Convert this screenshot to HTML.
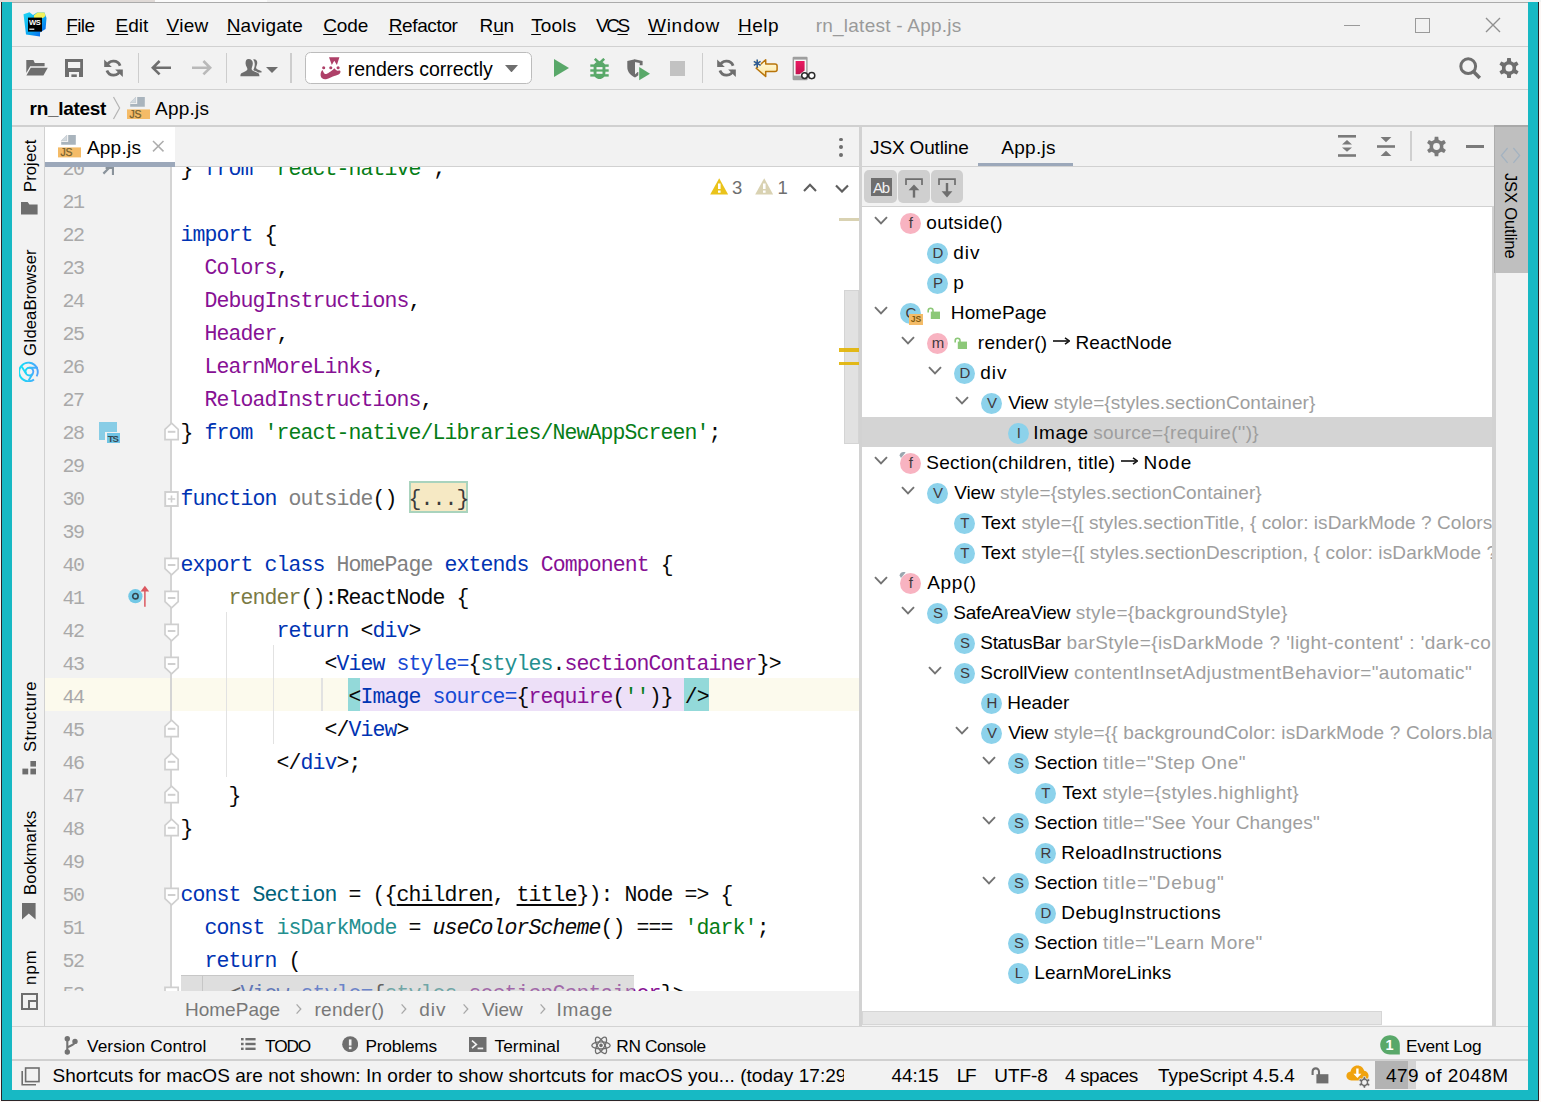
<!DOCTYPE html>
<html><head><meta charset="utf-8"><title>rn_latest - App.js</title><style>
html,body{margin:0;padding:0}
body{width:1541px;height:1102px;position:relative;overflow:hidden;background:#fdf7f5;font-family:"Liberation Sans",sans-serif;}
.a{position:absolute;}
.t{white-space:pre;line-height:1;font-family:"Liberation Sans",sans-serif;}
.m{font-family:"Liberation Mono",monospace;}
.cl{position:absolute;left:181px;height:33px;line-height:33px;white-space:pre;font-family:"Liberation Mono",monospace;font-size:21.5px;letter-spacing:-0.902px;color:#080808;}
.ln{position:absolute;height:33px;line-height:33px;white-space:pre;font-family:"Liberation Mono",monospace;font-size:20px;letter-spacing:-1.702px;color:#a9a9a9;}
.k{color:#0033b3}.p{color:#871094}.s{color:#067d17}.g{color:#808080}.tl{color:#00627a}.v{color:#248f8f}.at{color:#174ad4}.i{font-style:italic}.u{text-decoration:underline;text-underline-offset:3px}
</style></head><body>
<div class="a" style="left:0px;top:0px;width:1541px;height:2px;background:#f1f1f1;"></div>
<div class="a" style="left:0px;top:0px;width:155px;height:2px;background:#e0dad7;"></div>
<div class="a" style="left:155px;top:0px;width:112px;height:2px;background:#fbfbfb;"></div>
<div class="a" style="left:1px;top:2px;width:1538px;height:1099px;background:#2b2629;"></div>
<div class="a" style="left:2px;top:2px;width:1536px;height:1098px;background:#17b9c4;"></div>
<div class="a" style="left:12px;top:2px;width:1516px;height:1088px;background:#f2f2f2;"></div>
<div class="a" style="left:12px;top:2px;width:1516px;height:1px;background:#ababab;"></div>
<svg class="a" style="left:23px;top:12px;" width="24" height="26" viewBox="0 0 24 26">
<defs><linearGradient id="wsg" x1="0" y1="0" x2="1" y2="1"><stop offset="0" stop-color="#21d7f3"/><stop offset="0.55" stop-color="#0aa5f0"/><stop offset="1" stop-color="#0a55f0"/></linearGradient></defs>
<path d="M0.5 2.2 L6.5 0.3 L10 3 L14 0.6 L21.5 0.6 L23.5 6 L22.6 17 L17 20.5 L17 24.6 L3 22.4 Z" fill="url(#wsg)"/>
<path d="M11 3.2 L14.5 0.6 L21.5 0.6 L22.5 4 L20 6 L11 6 Z" fill="#f3f15a"/>
<rect x="5" y="5.6" width="14" height="14" fill="#000"/>
<rect x="6.3" y="16.6" width="5" height="1.2" fill="#fff"/>
<text x="5.9" y="12.6" font-family="Liberation Sans" font-weight="700" font-size="7.6" fill="#fff" letter-spacing="-0.3">WS</text>
</svg>
<span class="a t" style="left:66.20px;top:16px;font-size:19px;color:#000;letter-spacing:-0.600px;text-underline-offset:1.5px;text-decoration-thickness:1.8px;"><u>F</u>ile</span>
<span class="a t" style="left:115.50px;top:16px;font-size:19px;color:#000;text-underline-offset:1.5px;text-decoration-thickness:1.8px;"><u>E</u>dit</span>
<span class="a t" style="left:166.60px;top:16px;font-size:19px;color:#000;letter-spacing:0.267px;text-underline-offset:1.5px;text-decoration-thickness:1.8px;"><u>V</u>iew</span>
<span class="a t" style="left:226.70px;top:16px;font-size:19px;color:#000;letter-spacing:0.171px;text-underline-offset:1.5px;text-decoration-thickness:1.8px;"><u>N</u>avigate</span>
<span class="a t" style="left:323.20px;top:16px;font-size:19px;color:#000;letter-spacing:-0.133px;text-underline-offset:1.5px;text-decoration-thickness:1.8px;"><u>C</u>ode</span>
<span class="a t" style="left:388.70px;top:16px;font-size:19px;color:#000;letter-spacing:-0.371px;text-underline-offset:1.5px;text-decoration-thickness:1.8px;"><u>R</u>efactor</span>
<span class="a t" style="left:479.60px;top:16px;font-size:19px;color:#000;letter-spacing:-0.200px;text-underline-offset:1.5px;text-decoration-thickness:1.8px;">R<u>u</u>n</span>
<span class="a t" style="left:531.20px;top:16px;font-size:19px;color:#000;letter-spacing:0.150px;text-underline-offset:1.5px;text-decoration-thickness:1.8px;"><u>T</u>ools</span>
<span class="a t" style="left:595.90px;top:16px;font-size:19px;color:#000;letter-spacing:-2.400px;text-underline-offset:1.5px;text-decoration-thickness:1.8px;">VC<u>S</u></span>
<span class="a t" style="left:648.00px;top:16px;font-size:19px;color:#000;letter-spacing:0.720px;text-underline-offset:1.5px;text-decoration-thickness:1.8px;"><u>W</u>indow</span>
<span class="a t" style="left:738.00px;top:16px;font-size:19px;color:#000;letter-spacing:0.467px;text-underline-offset:1.5px;text-decoration-thickness:1.8px;"><u>H</u>elp</span>
<span class="a t" style="left:815.70px;top:16px;font-size:19px;color:#9a9a9a;letter-spacing:0.235px;">rn_latest - App.js</span>
<div class="a" style="left:1344px;top:25px;width:16px;height:1.4px;background:#9a9a9a;"></div>
<div class="a" style="left:1414.5px;top:17.5px;width:15px;height:15px;background:transparent;border:1.4px solid #9a9a9a;box-sizing:border-box;"></div>
<svg class="a" style="left:1485px;top:17px;" width="16" height="16" viewBox="0 0 16 16"><path d="M1 1 L15 15 M15 1 L1 15" stroke="#8f8f8f" stroke-width="1.4" fill="none"/></svg>
<div class="a" style="left:12px;top:46px;width:1516px;height:1px;background:#d1d1d1;"></div>
<svg class="a" style="left:25.5px;top:60px;" width="22" height="16" viewBox="0 0 22 16"><path d="M0.3 0 H7.4 L8.8 3 H18.6 V6.2 H4.2 L0.3 13 Z" fill="#6e6e6e"/><path d="M4.8 7.8 H21.8 L17.4 15.6 H0.4 Z" fill="#6e6e6e"/></svg>
<svg class="a" style="left:65px;top:59px;" width="18" height="18" viewBox="0 0 18 18"><path fill-rule="evenodd" d="M0 0 H18 V18 H0 Z M3 3 V9 H15.2 V3 Z M4 13 V18 H14 V13 Z" fill="#6e6e6e"/><rect x="6.4" y="15.4" width="5.4" height="2.6" fill="#6e6e6e"/></svg>
<svg class="a" style="left:103.5px;top:59px;" width="19" height="18" viewBox="0 0 19 18"><path d="M2.74 7.39 A7 7 0 0 1 16.08 6.81" stroke="#6e6e6e" stroke-width="2.8" fill="none"/><path d="M16.26 11.01 A7 7 0 0 1 2.92 11.59" stroke="#6e6e6e" stroke-width="2.8" fill="none"/><path d="M0.2 0.4 L0.2 8 L7.8 8 Z" fill="#6e6e6e"/><path d="M18.8 18 L18.8 10.4 L11.2 10.4 Z" fill="#6e6e6e"/></svg>
<div class="a" style="left:137.5px;top:53px;width:1.8px;height:30px;background:#cdcdcd;"></div>
<svg class="a" style="left:151px;top:60px;" width="21" height="15.5" viewBox="0 0 21 15.5"><path d="M8.6 1 L1.8 7.7 L8.6 14.4 M2.2 7.7 H20" stroke="#6e6e6e" stroke-width="2.6" fill="none"/></svg>
<svg class="a" style="left:191px;top:60px;" width="21" height="15.5" viewBox="0 0 21 15.5"><path d="M12.4 1 L19.2 7.7 L12.4 14.4 M18.8 7.7 H1" stroke="#b9b9b9" stroke-width="2.6" fill="none"/></svg>
<div class="a" style="left:225.5px;top:53px;width:1.8px;height:30px;background:#cdcdcd;"></div>
<svg class="a" style="left:240px;top:59px;" width="22" height="18" viewBox="0 0 22 18"><path d="M13.2 0.4 c2.6 -0.6 4.4 1.4 4 4 c-0.3 2 -1.1 3 -1.1 4.3 c0 1.6 3 2.2 5.4 3.4 v1.4 h-3.6 c-1 -1.2 -3.6 -1.8 -4.6 -2.6 c1 -2 1.6 -4 1.4 -6.4 c-0.1 -1.6 -0.6 -3 -1.5 -4.1z" fill="#6e6e6e"/>
<path d="M8.6 0 c2.8 0 4.4 2 4.2 4.8 c-0.2 2.4 -1.2 3.8 -1.2 5.2 c0 2 4 2.6 6.8 4.2 c0.8 0.5 1 1.6 1 3 H0.4 c0 -1.4 0.2 -2.5 1 -3 c2.8 -1.6 6 -2.2 6 -4.2 c0 -1.4 -1.6 -2.8 -1.8 -5.2 C5.4 2 6.2 0 8.6 0z" fill="#6e6e6e"/></svg>
<svg class="a" style="left:266px;top:66.8px;" width="12" height="6" viewBox="0 0 12 6"><path d="M0 0 H12 L6 6 Z" fill="#6e6e6e"/></svg>
<div class="a" style="left:290.3px;top:53px;width:1.8px;height:30px;background:#cdcdcd;"></div>
<div class="a" style="left:305px;top:52px;width:227px;height:32px;background:#fff;border:1.6px solid #bcbcbc;border-radius:5.5px;box-sizing:border-box;"></div>
<svg class="a" style="left:319.5px;top:57px;" width="21.5" height="23" viewBox="0 0 21.5 23"><g fill="#ae4068"><path d="M9 0.2 H19.4 L16.9 7.9 L14.3 3.7 L11.8 7.9 Z"/>
<circle cx="3.7" cy="10.7" r="1.55"/><circle cx="10.8" cy="10.7" r="1.55"/><circle cx="18.1" cy="10.7" r="1.55"/>
<path d="M2.5 13 C1.5 13.5 0.3 16 0.6 18.5 C1 21.5 3.5 22.6 6 22.2 C9.5 21.6 12 19.6 15 18.8 C18 18 20.6 17 20.5 14.6 C20.4 13.4 19.6 13.2 18.6 13.6 C17.2 14.2 16 13.4 14.3 11.3 C12.6 13.4 10.5 14.4 9 15.6 C7.5 16.8 6 17.4 5 17 C3.6 16.4 3.4 14.6 2.5 13 Z"/></g></svg>
<span class="a t" style="left:347.80px;top:60px;font-size:19.5px;color:#000;letter-spacing:-0.012px;">renders correctly</span>
<svg class="a" style="left:505px;top:65px;" width="13" height="7.4" viewBox="0 0 13 7.4"><path d="M0 0 H13 L6.5 7.4 Z" fill="#6e6e6e"/></svg>
<svg class="a" style="left:554px;top:59px;" width="15" height="18" viewBox="0 0 15 18"><path d="M0 0 L15 9 L0 18 Z" fill="#59a869"/></svg>
<svg class="a" style="left:589.5px;top:57.5px;" width="19" height="21.5" viewBox="0 0 19 21.5"><g fill="#59a869"><path d="M4.8 0.8 L9.5 5.2 L14.2 0.8" stroke="#59a869" stroke-width="2.5" fill="none"/>
<path d="M3.6 9 C3.6 5.5 6 3.4 9.5 3.4 C13 3.4 15.4 5.5 15.4 9 V14.5 C15.4 18.5 12.8 21 9.5 21 C6.2 21 3.6 18.5 3.6 14.5 Z"/>
<rect x="0.3" y="6.4" width="18.4" height="2.4"/><rect x="0.3" y="11.3" width="18.4" height="2.4"/><rect x="0.3" y="16.2" width="18.4" height="2.4"/></g>
<rect x="6.5" y="9.1" width="6" height="2.3" fill="#f4f4f4"/><rect x="6.5" y="13.6" width="6" height="2.2" fill="#f4f4f4"/></svg>
<svg class="a" style="left:627px;top:58.5px;" width="24" height="22" viewBox="0 0 24 22"><g fill="#6e6e6e"><path d="M0.3 2 L8 0.3 V18.5 C4 16.4 0.3 13.4 0.3 8 Z"/><path d="M7.6 0.3 L15.6 2 V6.3 H12.7 V4.1 L7.6 3 Z"/>
<path d="M8 18.5 V15.6 L10.6 13 L11.3 13 V16.2 C10.2 17.1 9.2 17.9 8 18.5Z"/></g>
<path d="M12.2 8.1 L23 14.7 L12.2 21.3 Z" fill="#59a869"/></svg>
<div class="a" style="left:669.5px;top:60.6px;width:15.2px;height:15px;background:#c2c2c2;"></div>
<div class="a" style="left:701.5px;top:53px;width:1.8px;height:30px;background:#cdcdcd;"></div>
<svg class="a" style="left:716.6px;top:59px;" width="19" height="18" viewBox="0 0 19 18"><path d="M2.74 7.39 A7 7 0 0 1 16.08 6.81" stroke="#6e6e6e" stroke-width="2.8" fill="none"/><path d="M16.26 11.01 A7 7 0 0 1 2.92 11.59" stroke="#6e6e6e" stroke-width="2.8" fill="none"/><path d="M0.2 0.4 L0.2 8 L7.8 8 Z" fill="#6e6e6e"/><path d="M18.8 18 L18.8 10.4 L11.2 10.4 Z" fill="#6e6e6e"/></svg>
<svg class="a" style="left:752.5px;top:59px;" width="25" height="18.5" viewBox="0 0 25 18.5"><defs><linearGradient id="hg" x1="0" y1="0" x2="0" y2="1"><stop offset="0" stop-color="#fffbe0"/><stop offset="1" stop-color="#fde6a0"/></linearGradient></defs>
<path d="M12.7 0.8 L3.2 9.2 L12.7 17.4 V12.6 H22 C23.4 12.6 24.1 11.8 24.1 10.6 V7 C24.1 5.8 23.4 5 22 5 H12.7 Z" fill="url(#hg)" stroke="#b8740a" stroke-width="1.5" stroke-linejoin="round"/>
<circle cx="4.2" cy="4.4" r="3.6" fill="#fdf3cf"/>
<path d="M4.2 0.4 V8.4 M0.8 2.4 L7.6 6.4 M7.6 2.4 L0.8 6.4" stroke="#2d5a94" stroke-width="1.6" fill="none"/></svg>
<svg class="a" style="left:791.5px;top:55.5px;" width="25" height="25" viewBox="0 0 25 25"><rect x="0.6" y="0.8" width="15" height="23.4" rx="1.2" fill="#9e9e9e"/>
<rect x="2" y="3.6" width="12.2" height="16" fill="#f6f8f7"/>
<defs><linearGradient id="phg" x1="0" y1="0" x2="0" y2="1"><stop offset="0" stop-color="#ea1a62"/><stop offset="1" stop-color="#c3124f"/></linearGradient></defs>
<path d="M3.6 5 H12.6 V14.4 L7.6 18.2 H3.6 Z" fill="url(#phg)"/>
<circle cx="12.6" cy="19.6" r="2.9" fill="#fff" stroke="#2b2b2b" stroke-width="1.5"/><circle cx="19.7" cy="19.6" r="3.1" fill="#fff" stroke="#2b2b2b" stroke-width="1.5"/><path d="M15 19.6 H17.2" stroke="#2b2b2b" stroke-width="1.6"/></svg>
<svg class="a" style="left:1459px;top:57px;" width="23" height="23" viewBox="0 0 23 23"><circle cx="9.2" cy="9.2" r="7.4" fill="none" stroke="#6e6e6e" stroke-width="3"/><path d="M14.4 14.6 L20.8 21" stroke="#6e6e6e" stroke-width="3.6"/></svg>
<svg class="a" style="left:1498px;top:57px;" width="22" height="22" viewBox="0 0 22 22"><path fill-rule="evenodd" d="M8.85 4.13 L9.19 0.96 L12.81 0.96 L13.15 4.13 L15.87 5.70 L18.79 4.42 L20.60 7.54 L18.03 9.43 L18.03 12.57 L20.60 14.46 L18.79 17.58 L15.87 16.30 L13.15 17.87 L12.81 21.04 L9.19 21.04 L8.85 17.87 L6.13 16.30 L3.21 17.58 L1.40 14.46 L3.97 12.57 L3.97 9.43 L1.40 7.54 L3.21 4.42 L6.13 5.70 Z M14.50 11.00 A3.5 3.5 0 1 0 7.50 11.00 A3.5 3.5 0 1 0 14.50 11.00 Z" fill="#6e6e6e"/></svg>
<div class="a" style="left:12px;top:89px;width:1516px;height:1px;background:#d1d1d1;"></div>
<span class="a t" style="left:29.60px;top:99px;font-size:19px;color:#000;font-weight:700;letter-spacing:-0.300px;">rn_latest</span>
<svg class="a" style="left:112px;top:96px;" width="10" height="24" viewBox="0 0 10 24"><path d="M1.5 1 L7.6 12 L1.5 23" stroke="#b4b4b4" stroke-width="1.2" fill="none"/></svg>
<svg class="a" style="left:127.4px;top:96.5px;" width="23" height="22.5" viewBox="0 0 23 22.5"><path d="M3.2 9.8 V5.6 L8.8 0 H17.8 V9.8 Z" fill="#a9b4bd"/><path d="M3.2 5.6 L8.8 0 V5.6 Z" fill="#d3d9de"/><path d="M9.6 0 V6.4 H3.2" fill="none" stroke="#f2f2f2" stroke-width="1.2"/>
<rect x="0" y="12.4" width="23" height="10" fill="#f4bb67"/>
<text x="2.4" y="21" font-family="Liberation Sans" font-size="10.4" fill="#75602f" stroke="#75602f" stroke-width="0.25">JS</text></svg>
<span class="a t" style="left:155.00px;top:99px;font-size:19px;color:#000;letter-spacing:0.240px;">App.js</span>
<div class="a" style="left:12px;top:125px;width:1516px;height:2px;background:#d0d0d0;"></div>
<div class="a" style="left:44px;top:127px;width:1px;height:900px;background:#d1d1d1;"></div>
<span class="a t" style="left:22.8px;top:192.10px;font-size:16.6px;color:#000;transform-origin:0 0;transform:rotate(-90deg);letter-spacing:0.100px;">Project</span>
<svg class="a" style="left:21px;top:202px;" width="17" height="13" viewBox="0 0 17 13"><path d="M0 0 H6.6 L8.4 2.6 H16.6 V12.6 H0 Z" fill="#6e6e6e"/></svg>
<span class="a t" style="left:22.8px;top:356.20px;font-size:16.6px;color:#000;transform-origin:0 0;transform:rotate(-90deg);letter-spacing:0.036px;">GIdeaBrowser</span>
<svg class="a" style="left:18.6px;top:361.4px;" width="21" height="21" viewBox="0 0 21 21"><defs><linearGradient id="gib" x1="0" y1="0" x2="1" y2="0"><stop offset="0" stop-color="#14e0f6"/><stop offset="1" stop-color="#4da4fc"/></linearGradient></defs>
<g fill="none" stroke="url(#gib)" stroke-width="1.9"><path d="M17.6 15.4 A9.3 9.3 0 1 0 15 18.4"/><circle cx="10.4" cy="10.6" r="3.9"/>
<path d="M2.6 5.4 L7.2 12.8 M10.4 6.7 H18.8 M13.8 12.6 L9.6 19.6"/></g></svg>
<span class="a t" style="left:22.8px;top:751.70px;font-size:16.6px;color:#000;transform-origin:0 0;transform:rotate(-90deg);letter-spacing:0.400px;">Structure</span>
<svg class="a" style="left:22px;top:761px;" width="15" height="14" viewBox="0 0 15 14"><rect x="8.4" y="0" width="5.6" height="5.6" fill="#6e6e6e"/><rect x="0.4" y="7.6" width="5.8" height="5.8" fill="#6e6e6e"/><rect x="8.4" y="7.6" width="5.6" height="5.8" fill="#6e6e6e"/></svg>
<span class="a t" style="left:22.8px;top:894.80px;font-size:16.6px;color:#000;transform-origin:0 0;transform:rotate(-90deg);letter-spacing:0.175px;">Bookmarks</span>
<svg class="a" style="left:22.4px;top:903.4px;" width="14" height="17" viewBox="0 0 14 17"><path d="M0 0 H13.6 V16.6 L6.8 10.6 L0 16.6 Z" fill="#6e6e6e"/></svg>
<span class="a t" style="left:22.8px;top:985.30px;font-size:16.6px;color:#000;transform-origin:0 0;transform:rotate(-90deg);letter-spacing:1.200px;">npm</span>
<svg class="a" style="left:21px;top:993px;" width="17" height="17" viewBox="0 0 17 17"><rect x="1" y="1" width="15" height="15" fill="none" stroke="#6e6e6e" stroke-width="2"/><path d="M8 16 V8 H16" fill="none" stroke="#6e6e6e" stroke-width="2"/></svg>
<div class="a" style="left:45px;top:127px;width:130px;height:40px;background:#fff;"></div>
<div class="a" style="left:45px;top:162.4px;width:130px;height:4.6px;background:#9ca8ba;"></div>
<div class="a" style="left:175px;top:166px;width:686px;height:1px;background:#d1d1d1;"></div>
<svg class="a" style="left:58px;top:135px;" width="23" height="22.5" viewBox="0 0 23 22.5"><path d="M3.2 9.8 V5.6 L8.8 0 H17.8 V9.8 Z" fill="#a9b4bd"/><path d="M3.2 5.6 L8.8 0 V5.6 Z" fill="#d3d9de"/><path d="M9.6 0 V6.4 H3.2" fill="none" stroke="#f2f2f2" stroke-width="1.2"/>
<rect x="0" y="12.4" width="23" height="10" fill="#f4bb67"/>
<text x="2.4" y="21" font-family="Liberation Sans" font-size="10.4" fill="#75602f" stroke="#75602f" stroke-width="0.25">JS</text></svg>
<span class="a t" style="left:86.90px;top:138px;font-size:19px;color:#000;letter-spacing:0.240px;">App.js</span>
<svg class="a" style="left:152px;top:139.8px;" width="12.5" height="12.4" viewBox="0 0 12.5 12.4"><path d="M1 1 L11.5 11.4 M11.5 1 L1 11.4" stroke="#adadad" stroke-width="1.5" fill="none"/></svg>
<div class="a" style="left:839.2px;top:137.6px;width:3.9px;height:3.9px;background:#6e6e6e;border-radius:50%;"></div>
<div class="a" style="left:839.2px;top:145.4px;width:3.9px;height:3.9px;background:#6e6e6e;border-radius:50%;"></div>
<div class="a" style="left:839.2px;top:153.2px;width:3.9px;height:3.9px;background:#6e6e6e;border-radius:50%;"></div>
<div class="a" style="left:45px;top:167px;width:816px;height:824px;overflow:hidden;background:#fff;">
<div class="a" style="left:0px;top:0px;width:125px;height:824px;background:#f2f2f2;"></div>
<div class="a" style="left:0px;top:511px;width:814px;height:33px;background:#fcfaed;"></div>
<div class="a" style="left:125px;top:0px;width:2px;height:824px;background:#d4d4d4;"></div>
<div class="a" style="left:180.6px;top:445px;width:1.5px;height:165px;background:#e2e2e2;"></div>
<div class="a" style="left:227.89999999999998px;top:478px;width:1.5px;height:99px;background:#e2e2e2;"></div>
<div class="a" style="left:276px;top:511px;width:1.5px;height:33px;background:#e2e2e2;"></div>
<div class="ln" style="left:17.6px;top:-14px">20</div>
<div class="ln" style="left:17.6px;top:19px">21</div>
<div class="ln" style="left:17.6px;top:52px">22</div>
<div class="ln" style="left:17.6px;top:85px">23</div>
<div class="ln" style="left:17.6px;top:118px">24</div>
<div class="ln" style="left:17.6px;top:151px">25</div>
<div class="ln" style="left:17.6px;top:184px">26</div>
<div class="ln" style="left:17.6px;top:217px">27</div>
<div class="ln" style="left:17.6px;top:250px">28</div>
<div class="ln" style="left:17.6px;top:283px">29</div>
<div class="ln" style="left:17.6px;top:316px">30</div>
<div class="ln" style="left:17.6px;top:349px">39</div>
<div class="ln" style="left:17.6px;top:382px">40</div>
<div class="ln" style="left:17.6px;top:415px">41</div>
<div class="ln" style="left:17.6px;top:448px">42</div>
<div class="ln" style="left:17.6px;top:481px">43</div>
<div class="ln" style="left:17.6px;top:514px">44</div>
<div class="ln" style="left:17.6px;top:547px">45</div>
<div class="ln" style="left:17.6px;top:580px">46</div>
<div class="ln" style="left:17.6px;top:613px">47</div>
<div class="ln" style="left:17.6px;top:646px">48</div>
<div class="ln" style="left:17.6px;top:679px">49</div>
<div class="ln" style="left:17.6px;top:712px">50</div>
<div class="ln" style="left:17.6px;top:745px">51</div>
<div class="ln" style="left:17.6px;top:778px">52</div>
<div class="ln" style="left:17.6px;top:811px">53</div>
<div class="a" style="left:303.4px;top:511px;width:360.4px;height:33px;background:#ede0f8;"></div>
<div class="a" style="left:303.4px;top:511px;width:12px;height:33px;background:#93d9d9;"></div>
<div class="a" style="left:639px;top:511px;width:24.8px;height:33px;background:#93d9d9;"></div>
<div class="a" style="left:363.5px;top:313.5px;width:59.4px;height:32.5px;background:#f6e9c4;border:2px solid #a9d3bd;box-sizing:border-box;"></div>
<div class="cl" style="left:135.5px;top:-14px">} <span class="k">from</span> <span class="s">'react-native'</span>;</div>
<div class="cl" style="left:135.5px;top:19px"></div>
<div class="cl" style="left:135.5px;top:52px"><span class="k">import</span> {</div>
<div class="cl" style="left:135.5px;top:85px">  <span class="p">Colors</span>,</div>
<div class="cl" style="left:135.5px;top:118px">  <span class="p">DebugInstructions</span>,</div>
<div class="cl" style="left:135.5px;top:151px">  <span class="p">Header</span>,</div>
<div class="cl" style="left:135.5px;top:184px">  <span class="p">LearnMoreLinks</span>,</div>
<div class="cl" style="left:135.5px;top:217px">  <span class="p">ReloadInstructions</span>,</div>
<div class="cl" style="left:135.5px;top:250px">} <span class="k">from</span> <span class="s">'react-native/Libraries/NewAppScreen'</span>;</div>
<div class="cl" style="left:135.5px;top:283px"></div>
<div class="cl" style="left:135.5px;top:316px"><span class="k">function</span> <span class="g">outside</span>() <span style="color:#3b3b3b">{...}</span></div>
<div class="cl" style="left:135.5px;top:349px"></div>
<div class="cl" style="left:135.5px;top:382px"><span class="k">export</span> <span class="k">class</span> <span class="g">HomePage</span> <span class="k">extends</span> <span class="p">Component</span> {</div>
<div class="cl" style="left:135.5px;top:415px">    <span style="color:#7a7a43">render</span>():ReactNode {</div>
<div class="cl" style="left:135.5px;top:448px">        <span class="k">return</span> &lt;<span class="k">div</span>&gt;</div>
<div class="cl" style="left:135.5px;top:481px">            &lt;<span class="k">View</span> <span class="at">style=</span>{<span class="v">styles</span>.<span class="p">sectionContainer</span>}&gt;</div>
<div class="cl" style="left:135.5px;top:514px">              &lt;<span class="k">Image</span> <span class="at">source=</span>{<span class="p">require</span>(<span class="s">''</span>)} /&gt;</div>
<div class="cl" style="left:135.5px;top:547px">            &lt;/<span class="k">View</span>&gt;</div>
<div class="cl" style="left:135.5px;top:580px">        &lt;/<span class="k">div</span>&gt;;</div>
<div class="cl" style="left:135.5px;top:613px">    }</div>
<div class="cl" style="left:135.5px;top:646px">}</div>
<div class="cl" style="left:135.5px;top:679px"></div>
<div class="cl" style="left:135.5px;top:712px"><span class="k">const</span> <span class="tl">Section</span> = ({<span class="u">children</span>, <span class="u">title</span>}): Node =&gt; {</div>
<div class="cl" style="left:135.5px;top:745px">  <span class="k">const</span> <span class="v">isDarkMode</span> = <span class="i">useColorScheme</span>() === <span class="s">'dark'</span>;</div>
<div class="cl" style="left:135.5px;top:778px">  <span class="k">return</span> (</div>
<div class="cl" style="left:135.5px;top:811px">    &lt;<span class="k">View</span> <span class="at">style=</span>{<span class="v">styles</span>.<span class="p">sectionContainer</span>}&gt;</div>
<svg class="a" style="left:119px;top:255px;" width="15.5" height="19" viewBox="0 0 15.5 19"><path d="M1 17.6 V7.4 L7.6 1.2 L14.2 7.4 V17.6 Z" fill="#fff" stroke="#cfcfcf" stroke-width="1.7"/><path d="M3.8 9.8 H11.4" stroke="#cfcfcf" stroke-width="2"/></svg>
<svg class="a" style="left:119px;top:324px;" width="15.5" height="16.5" viewBox="0 0 15.5 16.5"><rect x="1.2" y="1" width="12.6" height="14" fill="#fff" stroke="#cfcfcf" stroke-width="1.9"/><path d="M3.8 8 H11.2 M7.5 4.4 V11.6" stroke="#cfcfcf" stroke-width="1.6"/></svg>
<svg class="a" style="left:119px;top:390px;" width="15.5" height="19" viewBox="0 0 15.5 19"><path d="M1 1.4 V11.6 L7.6 17.8 L14.2 11.6 V1.4 Z" fill="#fff" stroke="#cfcfcf" stroke-width="1.7"/><path d="M3.8 8 H11.4" stroke="#cfcfcf" stroke-width="2"/></svg>
<svg class="a" style="left:119px;top:423px;" width="15.5" height="19" viewBox="0 0 15.5 19"><path d="M1 1.4 V11.6 L7.6 17.8 L14.2 11.6 V1.4 Z" fill="#fff" stroke="#cfcfcf" stroke-width="1.7"/><path d="M3.8 8 H11.4" stroke="#cfcfcf" stroke-width="2"/></svg>
<svg class="a" style="left:119px;top:456px;" width="15.5" height="19" viewBox="0 0 15.5 19"><path d="M1 1.4 V11.6 L7.6 17.8 L14.2 11.6 V1.4 Z" fill="#fff" stroke="#cfcfcf" stroke-width="1.7"/><path d="M3.8 8 H11.4" stroke="#cfcfcf" stroke-width="2"/></svg>
<svg class="a" style="left:119px;top:489px;" width="15.5" height="19" viewBox="0 0 15.5 19"><path d="M1 1.4 V11.6 L7.6 17.8 L14.2 11.6 V1.4 Z" fill="#fff" stroke="#cfcfcf" stroke-width="1.7"/><path d="M3.8 8 H11.4" stroke="#cfcfcf" stroke-width="2"/></svg>
<svg class="a" style="left:119px;top:720px;" width="15.5" height="19" viewBox="0 0 15.5 19"><path d="M1 1.4 V11.6 L7.6 17.8 L14.2 11.6 V1.4 Z" fill="#fff" stroke="#cfcfcf" stroke-width="1.7"/><path d="M3.8 8 H11.4" stroke="#cfcfcf" stroke-width="2"/></svg>
<svg class="a" style="left:119px;top:552px;" width="15.5" height="19" viewBox="0 0 15.5 19"><path d="M1 17.6 V7.4 L7.6 1.2 L14.2 7.4 V17.6 Z" fill="#fff" stroke="#cfcfcf" stroke-width="1.7"/><path d="M3.8 9.8 H11.4" stroke="#cfcfcf" stroke-width="2"/></svg>
<svg class="a" style="left:119px;top:585px;" width="15.5" height="19" viewBox="0 0 15.5 19"><path d="M1 17.6 V7.4 L7.6 1.2 L14.2 7.4 V17.6 Z" fill="#fff" stroke="#cfcfcf" stroke-width="1.7"/><path d="M3.8 9.8 H11.4" stroke="#cfcfcf" stroke-width="2"/></svg>
<svg class="a" style="left:119px;top:618px;" width="15.5" height="19" viewBox="0 0 15.5 19"><path d="M1 17.6 V7.4 L7.6 1.2 L14.2 7.4 V17.6 Z" fill="#fff" stroke="#cfcfcf" stroke-width="1.7"/><path d="M3.8 9.8 H11.4" stroke="#cfcfcf" stroke-width="2"/></svg>
<svg class="a" style="left:119px;top:651px;" width="15.5" height="19" viewBox="0 0 15.5 19"><path d="M1 17.6 V7.4 L7.6 1.2 L14.2 7.4 V17.6 Z" fill="#fff" stroke="#cfcfcf" stroke-width="1.7"/><path d="M3.8 9.8 H11.4" stroke="#cfcfcf" stroke-width="2"/></svg>
<svg class="a" style="left:119px;top:819px;" width="15.5" height="8" viewBox="0 0 15.5 8"><path d="M1 8 V1.4 H14.2 V8" fill="#fff" stroke="#cfcfcf" stroke-width="1.7"/></svg>
<svg class="a" style="left:57px;top:0px;" width="12" height="8" viewBox="0 0 12 8"><path d="M1.4 6.6 L7 1 M3.6 0.9 H11 V8" stroke="#8a939b" stroke-width="2.2" fill="none"/></svg>
<div class="a" style="left:54px;top:255px;width:18px;height:18px;background:#88cde6;"></div>
<div class="a" style="left:60.400000000000006px;top:264.6px;width:15.4px;height:12.2px;background:#f2f2f2;"></div>
<div class="a" style="left:61.599999999999994px;top:265.8px;width:13.6px;height:10.4px;background:#6fc3e4;"></div>
<span class="a t" style="left:62.80px;top:267px;font-size:9.6px;color:#35464f;font-weight:700;letter-spacing:-1.200px;">TS</span>
<svg class="a" style="left:82.5px;top:418px;" width="22" height="23" viewBox="0 0 22 23"><circle cx="7.4" cy="11.2" r="7.1" fill="#72c8e6"/><circle cx="7.4" cy="11.2" r="2.7" fill="none" stroke="#35464f" stroke-width="1.7"/>
<path d="M16.9 21.8 V4" stroke="#db5860" stroke-width="1.5"/><path d="M12.6 6.4 L16.9 0.8 L21.2 6.4 Z" fill="#db5860"/></svg>
<svg class="a" style="left:664.6px;top:11px;" width="18.4" height="17" viewBox="0 0 18.4 17"><path d="M9.2 0.2 L18.2 16.6 H0.2 Z" fill="#eac31a"/><path d="M8 5.6 H10.6 V11 H8 Z M8 12.4 H10.6 V14.8 H8 Z" fill="#fff"/></svg>
<svg class="a" style="left:709.8px;top:11px;" width="18.4" height="17" viewBox="0 0 18.4 17"><path d="M9.2 0.2 L18.2 16.6 H0.2 Z" fill="#d9d2b2"/><path d="M8 5.6 H10.6 V11 H8 Z M8 12.4 H10.6 V14.8 H8 Z" fill="#fff"/></svg>
<span class="a t" style="left:687.10px;top:12px;font-size:18.5px;color:#6f6f6f;">3</span>
<span class="a t" style="left:732.40px;top:12px;font-size:18.5px;color:#6f6f6f;">1</span>
<svg class="a" style="left:758px;top:15.599999999999994px;" width="14" height="9.4" viewBox="0 0 14 9.4"><path d="M1 8 L7 1.8 L13 8" stroke="#5e5e5e" stroke-width="2.1" fill="none"/></svg>
<svg class="a" style="left:790px;top:16.599999999999994px;" width="14" height="9.4" viewBox="0 0 14 9.4"><path d="M1 1.4 L7 7.6 L13 1.4" stroke="#5e5e5e" stroke-width="2.1" fill="none"/></svg>
<div class="a" style="left:799px;top:123px;width:14.6px;height:153.5px;background:#e1e1e1;border:1px solid #d4d4d4;box-sizing:border-box;"></div>
<div class="a" style="left:794px;top:51px;width:20px;height:3.2px;background:#d9d2b2;"></div>
<div class="a" style="left:794px;top:181.39999999999998px;width:20px;height:3.4px;background:rgba(226,180,6,0.92);"></div>
<div class="a" style="left:794px;top:194.8px;width:20px;height:3.4px;background:rgba(226,180,6,0.92);"></div>
<div class="a" style="left:135.5px;top:808px;width:453.5px;height:16px;background:rgba(190,190,190,0.5);border-top:1px solid rgba(170,170,170,0.45);box-sizing:border-box;"></div>
<div class="a" style="left:157.4px;top:809px;width:1px;height:15px;background:#c6c6c6;"></div></div>
<div class="a" style="left:45px;top:991px;width:814px;height:36px;background:#f2f2f2;"></div>
<span class="a t" style="left:184.90px;top:1000px;font-size:19px;color:#787878;letter-spacing:0.029px;">HomePage</span>
<span class="a t" style="left:314.40px;top:1000px;font-size:19px;color:#787878;letter-spacing:0.314px;">render()</span>
<span class="a t" style="left:419.30px;top:1000px;font-size:19px;color:#787878;letter-spacing:1.000px;">div</span>
<span class="a t" style="left:482.10px;top:1000px;font-size:19px;color:#787878;letter-spacing:-0.067px;">View</span>
<span class="a t" style="left:556.40px;top:1000px;font-size:19px;color:#787878;letter-spacing:0.800px;">Image</span>
<svg class="a" style="left:295px;top:1003px;" width="8" height="12" viewBox="0 0 8 12"><path d="M1.6 1.4 L5.8 6 L1.6 10.6" stroke="#a8a8a8" stroke-width="1.3" fill="none"/></svg>
<svg class="a" style="left:400px;top:1003px;" width="8" height="12" viewBox="0 0 8 12"><path d="M1.6 1.4 L5.8 6 L1.6 10.6" stroke="#a8a8a8" stroke-width="1.3" fill="none"/></svg>
<svg class="a" style="left:462px;top:1003px;" width="8" height="12" viewBox="0 0 8 12"><path d="M1.6 1.4 L5.8 6 L1.6 10.6" stroke="#a8a8a8" stroke-width="1.3" fill="none"/></svg>
<svg class="a" style="left:539px;top:1003px;" width="8" height="12" viewBox="0 0 8 12"><path d="M1.6 1.4 L5.8 6 L1.6 10.6" stroke="#a8a8a8" stroke-width="1.3" fill="none"/></svg>
<div class="a" style="left:861px;top:127px;width:633px;height:40px;background:#f2f2f2;"></div>
<span class="a t" style="left:870.10px;top:138px;font-size:19px;color:#000;letter-spacing:-0.160px;">JSX Outline</span>
<span class="a t" style="left:1001.30px;top:138px;font-size:19px;color:#000;letter-spacing:0.280px;">App.js</span>
<div class="a" style="left:978px;top:162.6px;width:95px;height:4.4px;background:#9ca8ba;"></div>
<div class="a" style="left:861px;top:166px;width:633px;height:1px;background:#d1d1d1;"></div>
<svg class="a" style="left:1338px;top:135px;" width="18" height="22" viewBox="0 0 18 22"><rect x="0" y="0" width="18" height="2.6" fill="#7a7a7a"/><rect x="0" y="19.2" width="18" height="2.6" fill="#7a7a7a"/><path d="M9 5 L14 9.4 H4 Z M9 16.8 L14 12.4 H4 Z" fill="#7a7a7a"/></svg>
<svg class="a" style="left:1377px;top:136.5px;" width="18" height="19" viewBox="0 0 18 19"><rect x="0" y="8.2" width="18" height="2.6" fill="#7a7a7a"/><path d="M3.6 0 H14.4 L9 5.2 Z M3.6 19 H14.4 L9 13.8 Z" fill="#7a7a7a"/></svg>
<div class="a" style="left:1410.4px;top:131px;width:1.3px;height:30px;background:#cfcfcf;"></div>
<svg class="a" style="left:1425.5px;top:135.5px;" width="21" height="21" viewBox="0 0 21 21"><path fill-rule="evenodd" d="M8.41 3.82 L8.73 0.66 L12.27 0.66 L12.59 3.82 L15.24 5.35 L18.14 4.05 L19.91 7.11 L17.33 8.97 L17.33 12.03 L19.91 13.89 L18.14 16.95 L15.24 15.65 L12.59 17.18 L12.27 20.34 L8.73 20.34 L8.41 17.18 L5.76 15.65 L2.86 16.95 L1.09 13.89 L3.67 12.03 L3.67 8.97 L1.09 7.11 L2.86 4.05 L5.76 5.35 Z M13.90 10.50 A3.4 3.4 0 1 0 7.10 10.50 A3.4 3.4 0 1 0 13.90 10.50 Z" fill="#7a7a7a"/></svg>
<div class="a" style="left:1466px;top:144.6px;width:18px;height:3px;background:#7a7a7a;"></div>
<div class="a" style="left:864px;top:170.2px;width:32.6px;height:32.6px;background:#cfcfcf;border-radius:5px;"></div>
<div class="a" style="left:897.6px;top:170.2px;width:32.6px;height:32.6px;background:#cfcfcf;border-radius:5px;"></div>
<div class="a" style="left:930.6px;top:170.2px;width:32.6px;height:32.6px;background:#cfcfcf;border-radius:5px;"></div>
<div class="a" style="left:870.5px;top:178.3px;width:21px;height:17.6px;background:#6e6e6e;"></div>
<span class="a t" style="left:873.00px;top:180px;font-size:15px;color:#f2f2f2;letter-spacing:-1.200px;">Ab</span>
<svg class="a" style="left:905px;top:178px;" width="18" height="20" viewBox="0 0 18 20"><path d="M1 7 V1.2 H17 V7" fill="none" stroke="#6e6e6e" stroke-width="1.7"/><path d="M9 19.6 V9" stroke="#6e6e6e" stroke-width="2.4"/><path d="M3.6 12.2 L9 6.4 L14.4 12.2 Z" fill="#6e6e6e"/></svg>
<svg class="a" style="left:938px;top:178px;" width="18" height="20" viewBox="0 0 18 20"><path d="M1 7 V1.2 H17 V7" fill="none" stroke="#6e6e6e" stroke-width="1.7"/><path d="M9 5 V15" stroke="#6e6e6e" stroke-width="2.4"/><path d="M3.6 13.2 L9 19.4 L14.4 13.2 Z" fill="#6e6e6e"/></svg>
<div class="a" style="left:861px;top:206px;width:633px;height:1px;background:#d1d1d1;"></div>
<div class="a" style="left:861.8px;top:207px;width:630.2px;height:818px;background:#fff;"></div>
<div class="a" style="left:859px;top:127px;width:2.8px;height:900px;background:#d2d2d2;"></div>
<div class="a" style="left:1492px;top:207px;width:3.6px;height:820px;background:#d2d2d2;"></div>
<div class="a" style="left:861.8px;top:207px;width:630.2px;height:818px;overflow:hidden;">
<svg class="a" style="left:11.800000000000068px;top:9.4px;" width="14" height="9" viewBox="0 0 14 9"><path d="M1 1.2 L7 7.4 L13 1.2" stroke="#737373" stroke-width="1.9" fill="none"/></svg>
<div class="a" style="left:38.5px;top:5.6px;width:21.2px;height:21.2px;border-radius:50%;background:#f8b3c1"></div>
<span class="a t" style="left:38.7px;width:20.8px;text-align:center;top:8px;font-size:15px;color:#40393d">f</span>
<span class="a t" style="left:64.50px;top:6px;font-size:19px;color:#000;letter-spacing:0.300px;">outside()</span>
<div class="a" style="left:65.5px;top:35.6px;width:21.2px;height:21.2px;border-radius:50%;background:#8cd2eb"></div>
<span class="a t" style="left:65.7px;width:20.8px;text-align:center;top:38px;font-size:15px;color:#40393d">D</span>
<span class="a t" style="left:91.50px;top:36px;font-size:19px;color:#000;letter-spacing:0.900px;">div</span>
<div class="a" style="left:65.5px;top:65.6px;width:21.2px;height:21.2px;border-radius:50%;background:#8cd2eb"></div>
<span class="a t" style="left:65.7px;width:20.8px;text-align:center;top:68px;font-size:15px;color:#40393d">P</span>
<span class="a t" style="left:91.50px;top:66px;font-size:19px;color:#000;">p</span>
<svg class="a" style="left:11.800000000000068px;top:99.4px;" width="14" height="9" viewBox="0 0 14 9"><path d="M1 1.2 L7 7.4 L13 1.2" stroke="#737373" stroke-width="1.9" fill="none"/></svg>
<div class="a" style="left:38.5px;top:95.6px;width:21.2px;height:21.2px;border-radius:50%;background:#8cd2eb"></div>
<span class="a t" style="left:38.7px;width:20.8px;text-align:center;top:98px;font-size:15px;color:#40393d">C</span>
<svg class="a" style="left:65.30000000000004px;top:99.8px;" width="13.4" height="12.4" viewBox="0 0 13.4 12.4"><path d="M1.2 5.4 V3.6 C1.2 0.4 6 0.4 6 3.6 V5" fill="none" stroke="#8cc878" stroke-width="1.6"/><rect x="3.8" y="4.6" width="9.3" height="7.4" fill="#8cc878"/></svg>
<div class="a" style="left:47.700000000000045px;top:107px;width:13.6px;height:10.6px;background:#f4bb67;"></div>
<span class="a t" style="left:48.9px;top:108.2px;font-size:8.6px;font-weight:700;color:#7d5a12">JS</span>
<span class="a t" style="left:89.00px;top:96px;font-size:19px;color:#000;letter-spacing:0.114px;">HomePage</span>
<svg class="a" style="left:38.80000000000007px;top:129.4px;" width="14" height="9" viewBox="0 0 14 9"><path d="M1 1.2 L7 7.4 L13 1.2" stroke="#737373" stroke-width="1.9" fill="none"/></svg>
<div class="a" style="left:65.5px;top:125.6px;width:21.2px;height:21.2px;border-radius:50%;background:#f8b3c1"></div>
<span class="a t" style="left:65.7px;width:20.8px;text-align:center;top:128px;font-size:15px;color:#40393d">m</span>
<svg class="a" style="left:92.30000000000004px;top:129.8px;" width="13.4" height="12.4" viewBox="0 0 13.4 12.4"><path d="M1.2 5.4 V3.6 C1.2 0.4 6 0.4 6 3.6 V5" fill="none" stroke="#8cc878" stroke-width="1.6"/><rect x="3.8" y="4.6" width="9.3" height="7.4" fill="#8cc878"/></svg>
<span class="a t" style="left:116.00px;top:126px;font-size:19px;color:#000;letter-spacing:0.257px;">render()</span>
<svg class="a" style="left:191.4px;top:129.4px;" width="17" height="10" viewBox="0 0 17 10"><path d="M0 5 H15.4" stroke="#111" stroke-width="1.6" fill="none"/><path d="M12 1.8 L16.4 5 L12 8.2" stroke="#111" stroke-width="1.5" fill="none"/></svg>
<span class="a t" style="left:213.70px;top:126px;font-size:19px;color:#000;letter-spacing:0.150px;">ReactNode</span>
<svg class="a" style="left:65.80000000000007px;top:159.4px;" width="14" height="9" viewBox="0 0 14 9"><path d="M1 1.2 L7 7.4 L13 1.2" stroke="#737373" stroke-width="1.9" fill="none"/></svg>
<div class="a" style="left:92.5px;top:155.6px;width:21.2px;height:21.2px;border-radius:50%;background:#8cd2eb"></div>
<span class="a t" style="left:92.7px;width:20.8px;text-align:center;top:158px;font-size:15px;color:#40393d">D</span>
<span class="a t" style="left:118.50px;top:156px;font-size:19px;color:#000;letter-spacing:0.900px;">div</span>
<svg class="a" style="left:92.80000000000007px;top:189.4px;" width="14" height="9" viewBox="0 0 14 9"><path d="M1 1.2 L7 7.4 L13 1.2" stroke="#737373" stroke-width="1.9" fill="none"/></svg>
<div class="a" style="left:119.5px;top:185.6px;width:21.2px;height:21.2px;border-radius:50%;background:#8cd2eb"></div>
<span class="a t" style="left:119.7px;width:20.8px;text-align:center;top:188px;font-size:15px;color:#40393d">V</span>
<span class="a t" style="left:146.50px;top:186px;font-size:19px;color:#000;letter-spacing:-0.333px;">View</span>
<span class="a t" style="left:191.90px;top:186px;font-size:19px;color:#9e9e9e;letter-spacing:0.080px;">style={styles.sectionContainer}</span>
<div class="a" style="left:0px;top:210.2px;width:640px;height:29.4px;background:#d4d4d4;"></div>
<div class="a" style="left:146.5px;top:215.6px;width:21.2px;height:21.2px;border-radius:50%;background:#8cd2eb"></div>
<span class="a t" style="left:146.7px;width:20.8px;text-align:center;top:218px;font-size:15px;color:#40393d">I</span>
<span class="a t" style="left:171.50px;top:216px;font-size:19px;color:#000;letter-spacing:0.500px;">Image</span>
<span class="a t" style="left:231.40px;top:216px;font-size:19px;color:#9e9e9e;letter-spacing:0.295px;">source={require('')}</span>
<svg class="a" style="left:11.800000000000068px;top:249.4px;" width="14" height="9" viewBox="0 0 14 9"><path d="M1 1.2 L7 7.4 L13 1.2" stroke="#737373" stroke-width="1.9" fill="none"/></svg>
<div class="a" style="left:38.5px;top:245.6px;width:21.2px;height:21.2px;border-radius:50%;background:#f8b3c1"></div>
<span class="a t" style="left:38.7px;width:20.8px;text-align:center;top:248px;font-size:15px;color:#40393d">f</span>
<svg class="a" style="left:37.30000000000005px;top:244px;" width="8" height="8" viewBox="0 0 8 8"><path d="M0.6 4.6 C0.6 1.6 3.8 0 6.6 1.4 L2 7 Z" fill="#9aa7b0"/></svg>
<span class="a t" style="left:64.50px;top:246px;font-size:19px;color:#000;letter-spacing:0.270px;">Section(children, title)</span>
<svg class="a" style="left:258.8px;top:249.4px;" width="17" height="10" viewBox="0 0 17 10"><path d="M0 5 H15.4" stroke="#111" stroke-width="1.6" fill="none"/><path d="M12 1.8 L16.4 5 L12 8.2" stroke="#111" stroke-width="1.5" fill="none"/></svg>
<span class="a t" style="left:281.70px;top:246px;font-size:19px;color:#000;letter-spacing:0.800px;">Node</span>
<svg class="a" style="left:38.80000000000007px;top:279.4px;" width="14" height="9" viewBox="0 0 14 9"><path d="M1 1.2 L7 7.4 L13 1.2" stroke="#737373" stroke-width="1.9" fill="none"/></svg>
<div class="a" style="left:65.5px;top:275.6px;width:21.2px;height:21.2px;border-radius:50%;background:#8cd2eb"></div>
<span class="a t" style="left:65.7px;width:20.8px;text-align:center;top:278px;font-size:15px;color:#40393d">V</span>
<span class="a t" style="left:92.50px;top:276px;font-size:19px;color:#000;letter-spacing:-0.133px;">View</span>
<span class="a t" style="left:138.20px;top:276px;font-size:19px;color:#9e9e9e;letter-spacing:0.080px;">style={styles.sectionContainer}</span>
<div class="a" style="left:92.5px;top:305.6px;width:21.2px;height:21.2px;border-radius:50%;background:#8cd2eb"></div>
<span class="a t" style="left:92.7px;width:20.8px;text-align:center;top:308px;font-size:15px;color:#40393d">T</span>
<span class="a t" style="left:119.50px;top:306px;font-size:19px;color:#000;letter-spacing:-0.200px;">Text</span>
<span class="a t" style="left:159.60px;top:306px;font-size:19px;color:#9e9e9e;letter-spacing:0.056px;">style={[ styles.sectionTitle, { color: isDarkMode ? Colors.white</span>
<div class="a" style="left:92.5px;top:335.6px;width:21.2px;height:21.2px;border-radius:50%;background:#8cd2eb"></div>
<span class="a t" style="left:92.7px;width:20.8px;text-align:center;top:338px;font-size:15px;color:#40393d">T</span>
<span class="a t" style="left:119.50px;top:336px;font-size:19px;color:#000;letter-spacing:-0.200px;">Text</span>
<span class="a t" style="left:159.60px;top:336px;font-size:19px;color:#9e9e9e;letter-spacing:0.152px;">style={[ styles.sectionDescription, { color: isDarkMode ? Colors</span>
<svg class="a" style="left:11.800000000000068px;top:369.4px;" width="14" height="9" viewBox="0 0 14 9"><path d="M1 1.2 L7 7.4 L13 1.2" stroke="#737373" stroke-width="1.9" fill="none"/></svg>
<div class="a" style="left:38.5px;top:365.6px;width:21.2px;height:21.2px;border-radius:50%;background:#f8b3c1"></div>
<span class="a t" style="left:38.7px;width:20.8px;text-align:center;top:368px;font-size:15px;color:#40393d">f</span>
<svg class="a" style="left:37.30000000000005px;top:364px;" width="8" height="8" viewBox="0 0 8 8"><path d="M0.6 4.6 C0.6 1.6 3.8 0 6.6 1.4 L2 7 Z" fill="#9aa7b0"/></svg>
<span class="a t" style="left:65.50px;top:366px;font-size:19px;color:#000;letter-spacing:0.600px;">App()</span>
<svg class="a" style="left:38.80000000000007px;top:399.4px;" width="14" height="9" viewBox="0 0 14 9"><path d="M1 1.2 L7 7.4 L13 1.2" stroke="#737373" stroke-width="1.9" fill="none"/></svg>
<div class="a" style="left:65.5px;top:395.6px;width:21.2px;height:21.2px;border-radius:50%;background:#8cd2eb"></div>
<span class="a t" style="left:65.7px;width:20.8px;text-align:center;top:398px;font-size:15px;color:#40393d">S</span>
<span class="a t" style="left:91.50px;top:396px;font-size:19px;color:#000;letter-spacing:-0.273px;">SafeAreaView</span>
<span class="a t" style="left:213.90px;top:396px;font-size:19px;color:#9e9e9e;letter-spacing:0.327px;">style={backgroundStyle}</span>
<div class="a" style="left:92.5px;top:425.6px;width:21.2px;height:21.2px;border-radius:50%;background:#8cd2eb"></div>
<span class="a t" style="left:92.7px;width:20.8px;text-align:center;top:428px;font-size:15px;color:#40393d">S</span>
<span class="a t" style="left:118.50px;top:426px;font-size:19px;color:#000;letter-spacing:-0.325px;">StatusBar</span>
<span class="a t" style="left:204.60px;top:426px;font-size:19px;color:#9e9e9e;letter-spacing:0.442px;">barStyle={isDarkMode ? 'light-content' : 'dark-content'}</span>
<svg class="a" style="left:65.80000000000007px;top:459.4px;" width="14" height="9" viewBox="0 0 14 9"><path d="M1 1.2 L7 7.4 L13 1.2" stroke="#737373" stroke-width="1.9" fill="none"/></svg>
<div class="a" style="left:92.5px;top:455.6px;width:21.2px;height:21.2px;border-radius:50%;background:#8cd2eb"></div>
<span class="a t" style="left:92.7px;width:20.8px;text-align:center;top:458px;font-size:15px;color:#40393d">S</span>
<span class="a t" style="left:118.50px;top:456px;font-size:19px;color:#000;letter-spacing:-0.044px;">ScrollView</span>
<span class="a t" style="left:212.20px;top:456px;font-size:19px;color:#9e9e9e;letter-spacing:0.420px;">contentInsetAdjustmentBehavior="automatic"</span>
<div class="a" style="left:119.5px;top:485.6px;width:21.2px;height:21.2px;border-radius:50%;background:#8cd2eb"></div>
<span class="a t" style="left:119.7px;width:20.8px;text-align:center;top:488px;font-size:15px;color:#40393d">H</span>
<span class="a t" style="left:145.50px;top:486px;font-size:19px;color:#000;letter-spacing:-0.040px;">Header</span>
<svg class="a" style="left:92.80000000000007px;top:519.4px;" width="14" height="9" viewBox="0 0 14 9"><path d="M1 1.2 L7 7.4 L13 1.2" stroke="#737373" stroke-width="1.9" fill="none"/></svg>
<div class="a" style="left:119.5px;top:515.6px;width:21.2px;height:21.2px;border-radius:50%;background:#8cd2eb"></div>
<span class="a t" style="left:119.7px;width:20.8px;text-align:center;top:518px;font-size:15px;color:#40393d">V</span>
<span class="a t" style="left:146.50px;top:516px;font-size:19px;color:#000;letter-spacing:-0.333px;">View</span>
<span class="a t" style="left:191.90px;top:516px;font-size:19px;color:#9e9e9e;letter-spacing:0.162px;">style={{ backgroundColor: isDarkMode ? Colors.black</span>
<svg class="a" style="left:119.80000000000007px;top:549.4px;" width="14" height="9" viewBox="0 0 14 9"><path d="M1 1.2 L7 7.4 L13 1.2" stroke="#737373" stroke-width="1.9" fill="none"/></svg>
<div class="a" style="left:146.5px;top:545.6px;width:21.2px;height:21.2px;border-radius:50%;background:#8cd2eb"></div>
<span class="a t" style="left:146.7px;width:20.8px;text-align:center;top:548px;font-size:15px;color:#40393d">S</span>
<span class="a t" style="left:172.50px;top:546px;font-size:19px;color:#000;letter-spacing:-0.033px;">Section</span>
<span class="a t" style="left:241.30px;top:546px;font-size:19px;color:#9e9e9e;letter-spacing:0.533px;">title="Step One"</span>
<div class="a" style="left:173.5px;top:575.6px;width:21.2px;height:21.2px;border-radius:50%;background:#8cd2eb"></div>
<span class="a t" style="left:173.7px;width:20.8px;text-align:center;top:578px;font-size:15px;color:#40393d">T</span>
<span class="a t" style="left:200.50px;top:576px;font-size:19px;color:#000;letter-spacing:-0.200px;">Text</span>
<span class="a t" style="left:240.60px;top:576px;font-size:19px;color:#9e9e9e;letter-spacing:0.383px;">style={styles.highlight}</span>
<svg class="a" style="left:119.80000000000007px;top:609.4px;" width="14" height="9" viewBox="0 0 14 9"><path d="M1 1.2 L7 7.4 L13 1.2" stroke="#737373" stroke-width="1.9" fill="none"/></svg>
<div class="a" style="left:146.5px;top:605.6px;width:21.2px;height:21.2px;border-radius:50%;background:#8cd2eb"></div>
<span class="a t" style="left:146.7px;width:20.8px;text-align:center;top:608px;font-size:15px;color:#40393d">S</span>
<span class="a t" style="left:172.50px;top:606px;font-size:19px;color:#000;letter-spacing:-0.033px;">Section</span>
<span class="a t" style="left:241.30px;top:606px;font-size:19px;color:#9e9e9e;letter-spacing:0.174px;">title="See Your Changes"</span>
<div class="a" style="left:173.5px;top:635.6px;width:21.2px;height:21.2px;border-radius:50%;background:#8cd2eb"></div>
<span class="a t" style="left:173.7px;width:20.8px;text-align:center;top:638px;font-size:15px;color:#40393d">R</span>
<span class="a t" style="left:199.50px;top:636px;font-size:19px;color:#000;letter-spacing:0.176px;">ReloadInstructions</span>
<svg class="a" style="left:119.80000000000007px;top:669.4px;" width="14" height="9" viewBox="0 0 14 9"><path d="M1 1.2 L7 7.4 L13 1.2" stroke="#737373" stroke-width="1.9" fill="none"/></svg>
<div class="a" style="left:146.5px;top:665.6px;width:21.2px;height:21.2px;border-radius:50%;background:#8cd2eb"></div>
<span class="a t" style="left:146.7px;width:20.8px;text-align:center;top:668px;font-size:15px;color:#40393d">S</span>
<span class="a t" style="left:172.50px;top:666px;font-size:19px;color:#000;letter-spacing:-0.033px;">Section</span>
<span class="a t" style="left:241.30px;top:666px;font-size:19px;color:#9e9e9e;letter-spacing:0.867px;">title="Debug"</span>
<div class="a" style="left:173.5px;top:695.6px;width:21.2px;height:21.2px;border-radius:50%;background:#8cd2eb"></div>
<span class="a t" style="left:173.7px;width:20.8px;text-align:center;top:698px;font-size:15px;color:#40393d">D</span>
<span class="a t" style="left:199.50px;top:696px;font-size:19px;color:#000;letter-spacing:0.387px;">DebugInstructions</span>
<div class="a" style="left:146.5px;top:725.6px;width:21.2px;height:21.2px;border-radius:50%;background:#8cd2eb"></div>
<span class="a t" style="left:146.7px;width:20.8px;text-align:center;top:728px;font-size:15px;color:#40393d">S</span>
<span class="a t" style="left:172.50px;top:726px;font-size:19px;color:#000;letter-spacing:-0.033px;">Section</span>
<span class="a t" style="left:241.30px;top:726px;font-size:19px;color:#9e9e9e;letter-spacing:0.459px;">title="Learn More"</span>
<div class="a" style="left:146.5px;top:755.6px;width:21.2px;height:21.2px;border-radius:50%;background:#8cd2eb"></div>
<span class="a t" style="left:146.7px;width:20.8px;text-align:center;top:758px;font-size:15px;color:#40393d">L</span>
<span class="a t" style="left:172.50px;top:756px;font-size:19px;color:#000;letter-spacing:0.046px;">LearnMoreLinks</span>
<div class="a" style="left:0px;top:804px;width:520px;height:14px;background:#e6e6e6;border:1px solid #d6d6d6;box-sizing:border-box;"></div></div>
<div class="a" style="left:1495.6px;top:127px;width:32.4px;height:900px;background:#f2f2f2;"></div>
<div class="a" style="left:1494px;top:127px;width:34px;height:146px;background:#bfbfbf;border-left:1px solid #adadad;box-sizing:border-box;"></div>
<div class="a" style="left:1494.2px;top:125px;width:33.8px;height:2px;background:#a9a9a9;"></div>
<svg class="a" style="left:1500px;top:146.5px;" width="21" height="17" viewBox="0 0 21 17"><path d="M7.6 1 L1.4 8.4 L7.6 15.8 M13.4 1 L19.6 8.4 L13.4 15.8" stroke="#a3b2c0" stroke-width="1.3" fill="none"/></svg>
<span class="a t" style="left:1517.8px;top:173.30px;font-size:16.6px;color:#000;transform-origin:0 0;transform:rotate(90deg);letter-spacing:-0.200px;">JSX Outline</span>
<div class="a" style="left:12px;top:1025.6px;width:1516px;height:1.8px;background:#d3d3d3;"></div>
<div class="a" style="left:12px;top:1027px;width:1516px;height:32.5px;background:#f2f2f2;"></div>
<div class="a" style="left:12px;top:1059px;width:1516px;height:1.5px;background:#d0d0d0;"></div>
<svg class="a" style="left:64px;top:1036px;" width="14" height="19" viewBox="0 0 14 19"><circle cx="3.3" cy="2.8" r="2.7" fill="#737373"/><circle cx="3.3" cy="16" r="2.7" fill="#737373"/><circle cx="11" cy="5.4" r="2.7" fill="#737373"/><path d="M3.3 3 V16 M3.3 12 C3.3 9.4 11 10.4 11 5.6" stroke="#737373" stroke-width="2.1" fill="none"/></svg>
<span class="a t" style="left:87.00px;top:1038px;font-size:17.3px;color:#000;letter-spacing:0.086px;">Version Control</span>
<svg class="a" style="left:241.4px;top:1038.4px;" width="15.4" height="12.6" viewBox="0 0 15.4 12.6"><rect x="0" y="0" width="2.6" height="2.4" fill="#6e6e6e"/><rect x="4.4" y="0" width="10.2" height="2.4" fill="#6e6e6e"/><rect x="0" y="4.8" width="2.6" height="2.4" fill="#6e6e6e"/><rect x="4.4" y="4.8" width="10.2" height="2.4" fill="#6e6e6e"/><rect x="0" y="9.6" width="2.6" height="2.4" fill="#6e6e6e"/><rect x="4.4" y="9.6" width="10.2" height="2.4" fill="#6e6e6e"/></svg>
<span class="a t" style="left:265.10px;top:1038px;font-size:17.3px;color:#000;letter-spacing:-1.133px;">TODO</span>
<svg class="a" style="left:342.1px;top:1036px;" width="16.4" height="16.4" viewBox="0 0 16.4 16.4"><circle cx="8.2" cy="8.2" r="8" fill="#6e6e6e"/><rect x="6.9" y="3.4" width="2.6" height="6.2" fill="#f2f2f2"/><rect x="6.9" y="10.8" width="2.6" height="2.4" fill="#f2f2f2"/></svg>
<span class="a t" style="left:365.40px;top:1038px;font-size:17.3px;color:#000;letter-spacing:-0.171px;">Problems</span>
<svg class="a" style="left:469px;top:1037px;" width="17.5" height="15.4" viewBox="0 0 17.5 15.4"><rect width="17.5" height="15.4" fill="#6e6e6e"/><path d="M3 3.6 L7.4 7.4 L3 11.2" stroke="#f2f2f2" stroke-width="1.6" fill="none"/><rect x="8.6" y="10.6" width="5.6" height="1.7" fill="#f2f2f2"/></svg>
<span class="a t" style="left:494.50px;top:1038px;font-size:17.3px;color:#000;">Terminal</span>
<svg class="a" style="left:591px;top:1036px;" width="20" height="19" viewBox="0 0 20 19"><g fill="none" stroke="#6e6e6e" stroke-width="1.3"><ellipse cx="10" cy="9.4" rx="9.2" ry="3.6"/><ellipse cx="10" cy="9.4" rx="9.2" ry="3.6" transform="rotate(60 10 9.4)"/><ellipse cx="10" cy="9.4" rx="9.2" ry="3.6" transform="rotate(120 10 9.4)"/></g><circle cx="10" cy="9.4" r="1.8" fill="#6e6e6e"/></svg>
<span class="a t" style="left:616.30px;top:1038px;font-size:17.3px;color:#000;letter-spacing:-0.378px;">RN Console</span>
<svg class="a" style="left:1379.5px;top:1035px;" width="20.5" height="20" viewBox="0 0 20.5 20"><path d="M10 0.2 C15.6 0.2 19.8 4.4 19.8 9.8 V19.6 H10 C4.4 19.6 0.2 15.4 0.2 9.8 C0.2 4.4 4.4 0.2 10 0.2 Z" fill="#59a869"/></svg>
<span class="a t" style="left:1385.60px;top:1038px;font-size:14.5px;color:#fff;font-weight:700;">1</span>
<span class="a t" style="left:1405.90px;top:1038px;font-size:17.3px;color:#000;letter-spacing:-0.275px;">Event Log</span>
<svg class="a" style="left:20.5px;top:1066.5px;" width="19" height="19" viewBox="0 0 19 19"><rect x="4.6" y="1" width="13.4" height="13.6" fill="none" stroke="#6e6e6e" stroke-width="1.6"/><path d="M1.2 4 V17.8 H15" fill="none" stroke="#6e6e6e" stroke-width="1.6"/></svg>
<div class="a" style="left:50px;top:1061px;width:793.6px;height:29px;overflow:hidden;">
<span class="a t" style="left:2.50px;top:5px;font-size:19px;color:#000;letter-spacing:0.056px;">Shortcuts for macOS are not shown: In order to show shortcuts for macOS you... (today 17:29</span></div>
<span class="a t" style="left:891.50px;top:1066px;font-size:19px;color:#000;letter-spacing:-0.100px;">44:15</span>
<span class="a t" style="left:956.80px;top:1066px;font-size:19px;color:#000;letter-spacing:-2.400px;">LF</span>
<span class="a t" style="left:994.30px;top:1066px;font-size:19px;color:#000;letter-spacing:-0.100px;">UTF-8</span>
<span class="a t" style="left:1064.90px;top:1066px;font-size:19px;color:#000;letter-spacing:-0.400px;">4 spaces</span>
<span class="a t" style="left:1158.10px;top:1066px;font-size:19px;color:#000;letter-spacing:-0.040px;">TypeScript 4.5.4</span>
<svg class="a" style="left:1311px;top:1067px;" width="18" height="17" viewBox="0 0 18 17"><path d="M1.6 8 V4.8 C1.6 0.2 8 0.2 8 4.8 V8" fill="none" stroke="#6e6e6e" stroke-width="2.1"/><rect x="5.4" y="7.2" width="12" height="9.2" fill="#6e6e6e"/></svg>
<svg class="a" style="left:1346px;top:1065px;" width="25" height="23" viewBox="0 0 25 23"><path d="M5.4 15.4 C2.4 15.4 0.4 13.4 0.4 10.8 C0.4 8.4 2.2 6.6 4.6 6.4 C5.2 2.8 8 0.4 11.4 0.4 C14.8 0.4 17.4 2.6 18.2 5.8 C20.8 6.2 22.6 8.2 22.6 10.8 C22.6 12 22.2 13 21.6 13.8 H14 V15.4 Z" fill="#f0a30f"/><path d="M10.2 3.6 H12.6 V8.8 H15.4 L11.4 13 L7.4 8.8 H10.2 Z" fill="#fff"/><path fill-rule="evenodd" d="M17.14 13.39 L17.36 11.59 L19.44 11.59 L19.66 13.39 L21.24 14.31 L22.91 13.59 L23.95 15.40 L22.50 16.48 L22.50 18.32 L23.95 19.40 L22.91 21.21 L21.24 20.49 L19.66 21.41 L19.44 23.21 L17.36 23.21 L17.14 21.41 L15.56 20.49 L13.89 21.21 L12.85 19.40 L14.30 18.32 L14.30 16.48 L12.85 15.40 L13.89 13.59 L15.56 14.31 Z M20.50 17.40 A2.1 2.1 0 1 0 16.30 17.40 A2.1 2.1 0 1 0 20.50 17.40 Z" fill="#6a6a6a" stroke="#f2f2f2" stroke-width="0.7"/></svg>
<div class="a" style="left:1375.3px;top:1061.2px;width:140px;height:27.6px;background:#f2f2f2;"></div>
<div class="a" style="left:1375.3px;top:1061.2px;width:33px;height:27.6px;background:#b3b3b3;"></div>
<div class="a" style="left:1408.3px;top:1061.2px;width:8px;height:27.6px;background:#d3d3d3;"></div>
<span class="a t" style="left:1385.90px;top:1066px;font-size:19px;color:#000;letter-spacing:0.545px;">479 of 2048M</span>
</body></html>
